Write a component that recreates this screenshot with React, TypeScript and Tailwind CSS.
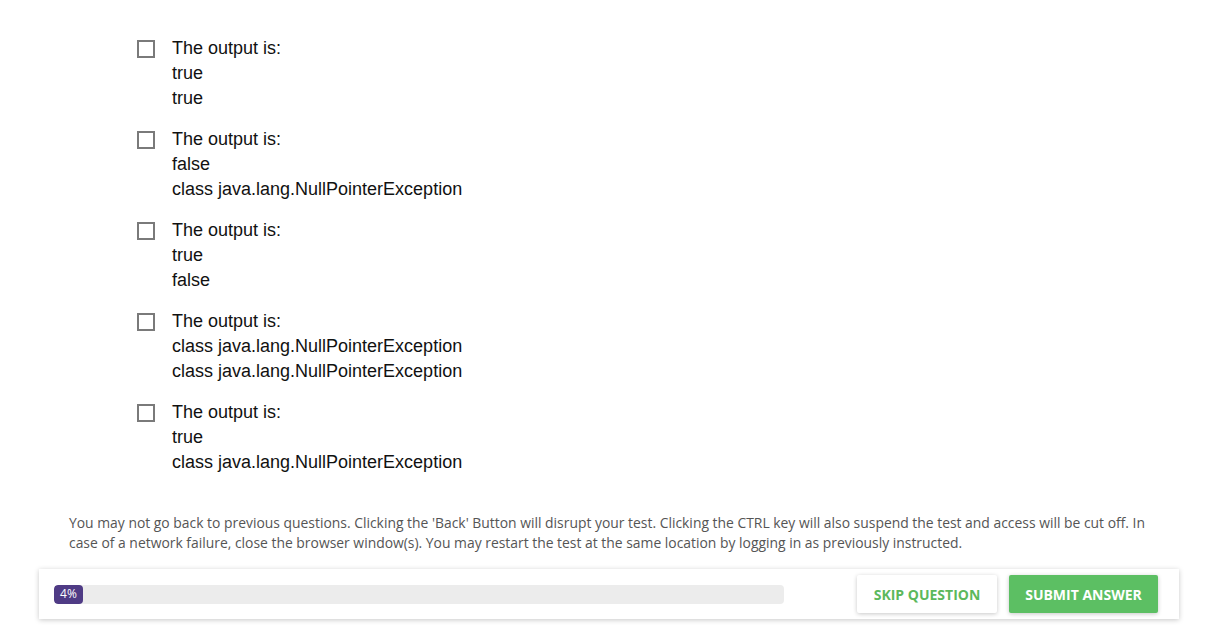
import React from "react";

const options: string[][] = [
  ["The output is:", "true", "true"],
  ["The output is:", "false", "class java.lang.NullPointerException"],
  ["The output is:", "true", "false"],
  ["The output is:", "class java.lang.NullPointerException", "class java.lang.NullPointerException"],
  ["The output is:", "true", "class java.lang.NullPointerException"],
];

export default function App() {
  return (
    <div className="w-full min-h-[628px] bg-white">
      <div className="flex flex-col gap-[16px] pt-[36px] pl-[137px]">
        {options.map((lines, i) => (
          <div key={i} className="flex items-start">
            <div className="mt-[4px] w-[18px] h-[18px] border-2 border-[#7a7a7a] bg-white shrink-0" />
            <div className="ml-[17px] text-[18px] leading-[25px] text-[#111] font-['Liberation_Sans',Arial,sans-serif]">
              {lines.map((l, j) => (
                <div key={j}>{l}</div>
              ))}
            </div>
          </div>
        ))}
      </div>
      <p className="mt-[38px] pl-[69px] pr-[75px] text-[13.9px] leading-[20px] text-[#555] font-['Open_Sans',sans-serif]">
        You may not go back to previous questions. Clicking the 'Back' Button will disrupt your test. Clicking the CTRL key will also suspend the test and access will be cut off. In case of a network failure, close the browser window(s). You may restart the test at the same location by logging in as previously instructed.
      </p>
      <div className="mt-[16px] ml-[39px] w-[1140px] h-[50px] bg-white shadow-[0_1px_5px_rgba(0,0,0,0.22)] flex items-center pl-[15px] pr-[21px]">
        <div className="w-[730px] h-[19px] rounded-[4px] bg-[#ececec] overflow-hidden flex">
          <div className="w-[29px] h-full bg-[#4f3b85] rounded-[4px] flex items-center justify-center text-white text-[12px] font-['Open_Sans',sans-serif]">
            4%
          </div>
        </div>
        <div className="ml-auto flex items-center gap-[12px]">
          <button className="w-[140px] h-[38px] bg-white rounded-[2px] shadow-[0_1px_4px_rgba(0,0,0,0.22)] text-[#5cb85c] text-[14px] font-bold font-['Open_Sans',sans-serif]">
            SKIP QUESTION
          </button>
          <button className="w-[149px] h-[38px] bg-[#5cbf63] rounded-[2px] shadow-[0_1px_4px_rgba(0,0,0,0.22)] text-white text-[14px] font-bold font-['Open_Sans',sans-serif]">
            SUBMIT ANSWER
          </button>
        </div>
      </div>
    </div>
  );
}
